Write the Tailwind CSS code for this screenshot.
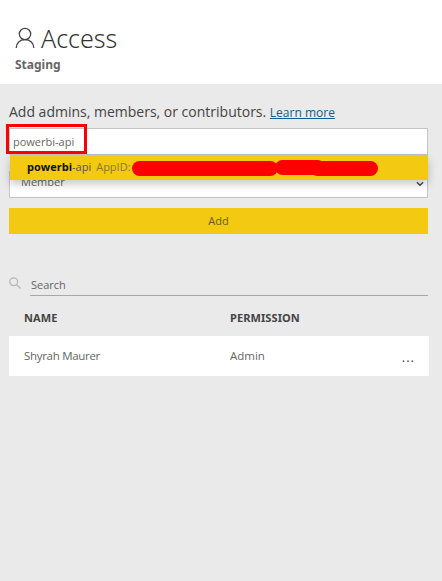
<!DOCTYPE html>
<html lang="en">
<head>
  <meta charset="UTF-8" />
  <title>Access</title>
  <script src="https://cdn.jsdelivr.net/npm/@tailwindcss/browser@4"></script>
</head>
<body class="w-[442px] h-[581px] overflow-hidden bg-[#eaeaea] font-['Open_Sans',sans-serif] text-[#333]">
  <header class="h-[84px] bg-white pl-[15px] pt-[21px]">
    <div class="flex items-center gap-[6px] h-[34px]">
      <svg class="w-[20px] h-[22px] text-[#444]" viewBox="0 0 20 22" fill="none" stroke="currentColor" stroke-width="1.3">
        <circle cx="10" cy="7" r="5.700" />
        <path d="M1.200 21c0-5 3.600-8.300 8.800-8.300s8.800 3.300 8.800 8.300" />
      </svg>
      <h1 class="text-[25px] leading-[34px] font-light text-[#333] font-['Noto_Sans',sans-serif]">Access</h1>
    </div>
    <p class="mt-[1px] text-[12px] leading-[18px] font-bold text-[#666] font-['Noto_Sans',sans-serif]">Staging</p>
  </header>

  <main class="px-[9px] w-[437px]">
    <p class="pt-[18px] h-[44px] text-[14px] leading-[20px] text-[#444] whitespace-nowrap">
      Add admins, members, or contributors.
      <a class="text-[12px] text-[#0f5f8c] underline">Learn more</a>
    </p>

    <div class="relative">
      <div class="h-[27px] bg-white border border-[#c4c4c4] pl-[3px] text-[11px] leading-[25px] text-[#666]">powerbi-api</div>
      <div class="absolute -left-[3px] -top-[4px] w-[81px] h-[30px] border-[3px] border-[#ff0000]"></div>

      <div class="mt-[16px] h-[27px] bg-white border border-[#c4c4c4] pl-[11px] pr-[3px] flex items-start justify-between text-[11px] leading-[20px] text-[#666]">
        <span>Member</span>
        <svg class="w-[8px] h-[6px] mt-[9px] text-[#444]" viewBox="0 0 9 6" fill="none" stroke="currentColor" stroke-width="1.500"><path d="M1 1l3.500 3.500L8 1" /></svg>
      </div>

      <!-- people picker suggestion, sits over the select -->
      <div class="absolute left-[1px] right-0 top-[27px] h-[25px] bg-[#f3c911] shadow-[0_4px_8px_rgba(0,0,0,0.22)] pl-[17px] flex items-center text-[11px] text-[#555] whitespace-nowrap">
        <b class="text-[#111]">powerbi</b><span>-api</span><span class="ml-[5px] text-[#8a7a2a]">AppID:</span>
        <div class="absolute left-[122px] top-[6px] w-[146px] h-[15px] rounded-full bg-[#fe0000]"></div>
        <div class="absolute left-[265px] top-[5px] w-[50px] h-[15px] rounded-full bg-[#fe0000]"></div>
        <div class="absolute left-[300px] top-[6px] w-[68px] h-[15px] rounded-full bg-[#fe0000]"></div>
      </div>
    </div>

    <button class="block w-full mt-[10px] h-[26px] bg-[#f3c911] text-[11px] text-[#66601f]">Add</button>

    <div class="mt-[41px] flex items-end gap-[9px]">
      <svg class="w-[12px] h-[12px] mb-[7px] text-[#b5b5b5]" viewBox="0 0 12 12" fill="none" stroke="currentColor" stroke-width="1.200">
        <circle cx="4.700" cy="4.700" r="3.900" />
        <path d="M7.500 7.500l4 4" />
      </svg>
      <div class="flex-1 h-[21px] border-b border-[#a8a8a8] pl-[1px] text-[11px] leading-[20px] text-[#666]">Search</div>
    </div>

    <div class="flex h-[40px] items-center pt-[4px] pl-[15px] text-[11px] font-bold tracking-[0.1px] text-[#444] font-['Noto_Sans',sans-serif]">
      <span class="w-[206px]">NAME</span>
      <span>PERMISSION</span>
    </div>

    <div class="flex h-[40px] w-[420px] items-center bg-white pl-[15px] text-[11.500px] text-[#666]">
      <span class="w-[206px] tracking-[-0.3px]">Shyrah Maurer</span>
      <span>Admin</span>
      <span class="ml-auto mr-[14px] mt-[3px] text-[#444] tracking-[1px] text-[13px]">...</span>
    </div>
  </main>
</body>
</html>
